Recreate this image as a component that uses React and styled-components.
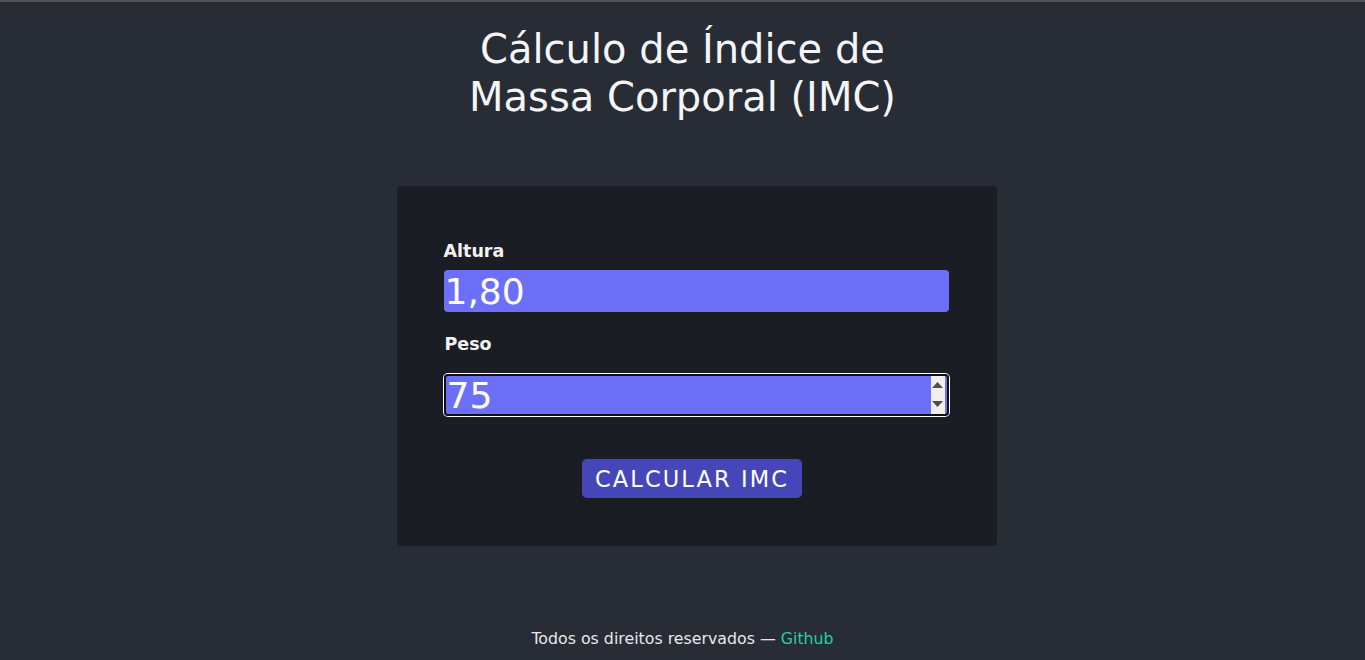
import React from "react";
import styled, { createGlobalStyle } from "styled-components";

const Global = createGlobalStyle`
  html, body { margin: 0; padding: 0; }
  body {
    background: #282c34;
    font-family: "DejaVu Sans", "Liberation Sans", sans-serif;
    color: #ffffff;
  }
  * { box-sizing: border-box; }
`;

const Page = styled.div`
  min-height: 660px;
  display: flex;
  flex-direction: column;
  align-items: center;
  border-top: 2px solid #4f5156;
`;

const Title = styled.h1`
  margin: 23px 0 0;
  font-size: 40px;
  font-weight: 400;
  line-height: 48px;
  text-align: center;
  color: #f4f5f8;
`;

const TitleLine = styled.span`
  display: block;
`;

const Card = styled.main`
  margin: 65px 0 0 28px;
  width: 600px;
  height: 360px;
  padding: 54px 48px 0 47px;
  background: #1a1d24;
  border-radius: 4px;
  display: flex;
  flex-direction: column;
`;

const Label = styled.label`
  display: block;
  font-size: 17.5px;
  font-weight: 700;
  line-height: 22px;
  color: #f2f2f2;
  margin: ${(p) => p.$top || 0}px 0 ${(p) => p.$gap}px ${(p) => p.$indent || 0}px;
`;

const Field = styled.div`
  position: relative;
  width: 505px;
  height: 42px;
`;

const Input = styled.input`
  display: block;
  width: 100%;
  height: 100%;
  border: none;
  border-radius: 4px;
  background: #6c6ff7;
  color: #ffffff;
  font-family: "DejaVu Sans", sans-serif;
  font-size: 36px;
  padding: 0 0 0 ${(p) => (p.$focused ? 3 : 1)}px;
  outline: none;
  box-shadow: ${(p) =>
    p.$focused ? "inset 0 0 0 2px #101010, 0 0 0 1px #ffffff" : "none"};
  -moz-appearance: textfield;
  &::-webkit-outer-spin-button,
  &::-webkit-inner-spin-button {
    -webkit-appearance: none;
    margin: 0;
  }
`;

const Spinner = styled.div`
  position: absolute;
  top: 2px;
  bottom: 2px;
  right: 4px;
  width: 14px;
  background: #efefef;
  display: flex;
  flex-direction: column;
  justify-content: space-between;
  align-items: center;
  padding: 6px 0 7px;
`;

const Arrow = ({ down }) => (
  <svg width="11" height="6" viewBox="0 0 11 6">
    <path
      d={down ? "M0 0 L11 0 L5.5 6 Z" : "M0 6 L11 6 L5.5 0 Z"}
      fill="#4d4d4d"
    />
  </svg>
);

const ButtonRow = styled.div`
  display: flex;
  justify-content: center;
  margin-top: 43px;
  padding-right: 8px;
`;

const Button = styled.button`
  width: 220px;
  height: 39px;
  border: none;
  border-radius: 5px;
  background: #4547b8;
  color: #ffffff;
  font-family: "DejaVu Sans", sans-serif;
  font-size: 22.5px;
  letter-spacing: 2.1px;
  padding: 0;
  cursor: pointer;
`;

const Footer = styled.footer`
  margin-top: auto;
  padding-bottom: 12px;
  font-size: 15.8px;
  color: #e8e8ea;
`;

const Link = styled.a`
  color: #1fd1a1;
  text-decoration: none;
`;

export default function App() {
  return (
    <>
      <Global />
      <Page>
        <Title>
          <TitleLine>Cálculo de Índice de</TitleLine>
          <TitleLine>Massa Corporal (IMC)</TitleLine>
        </Title>
        <Card>
          <Label htmlFor="altura" $gap={8}>Altura</Label>
          <Field>
            <Input id="altura" type="text" defaultValue="1,80" />
          </Field>
          <Label htmlFor="peso" $top={21} $gap={19} $indent={1}>Peso</Label>
          <Field>
            <Input id="peso" type="number" defaultValue="75" $focused />
            <Spinner>
              <Arrow />
              <Arrow down />
            </Spinner>
          </Field>
          <ButtonRow>
            <Button type="button">CALCULAR IMC</Button>
          </ButtonRow>
        </Card>
        <Footer>
          Todos os direitos reservados — <Link href="#">Github</Link>
        </Footer>
      </Page>
    </>
  );
}
